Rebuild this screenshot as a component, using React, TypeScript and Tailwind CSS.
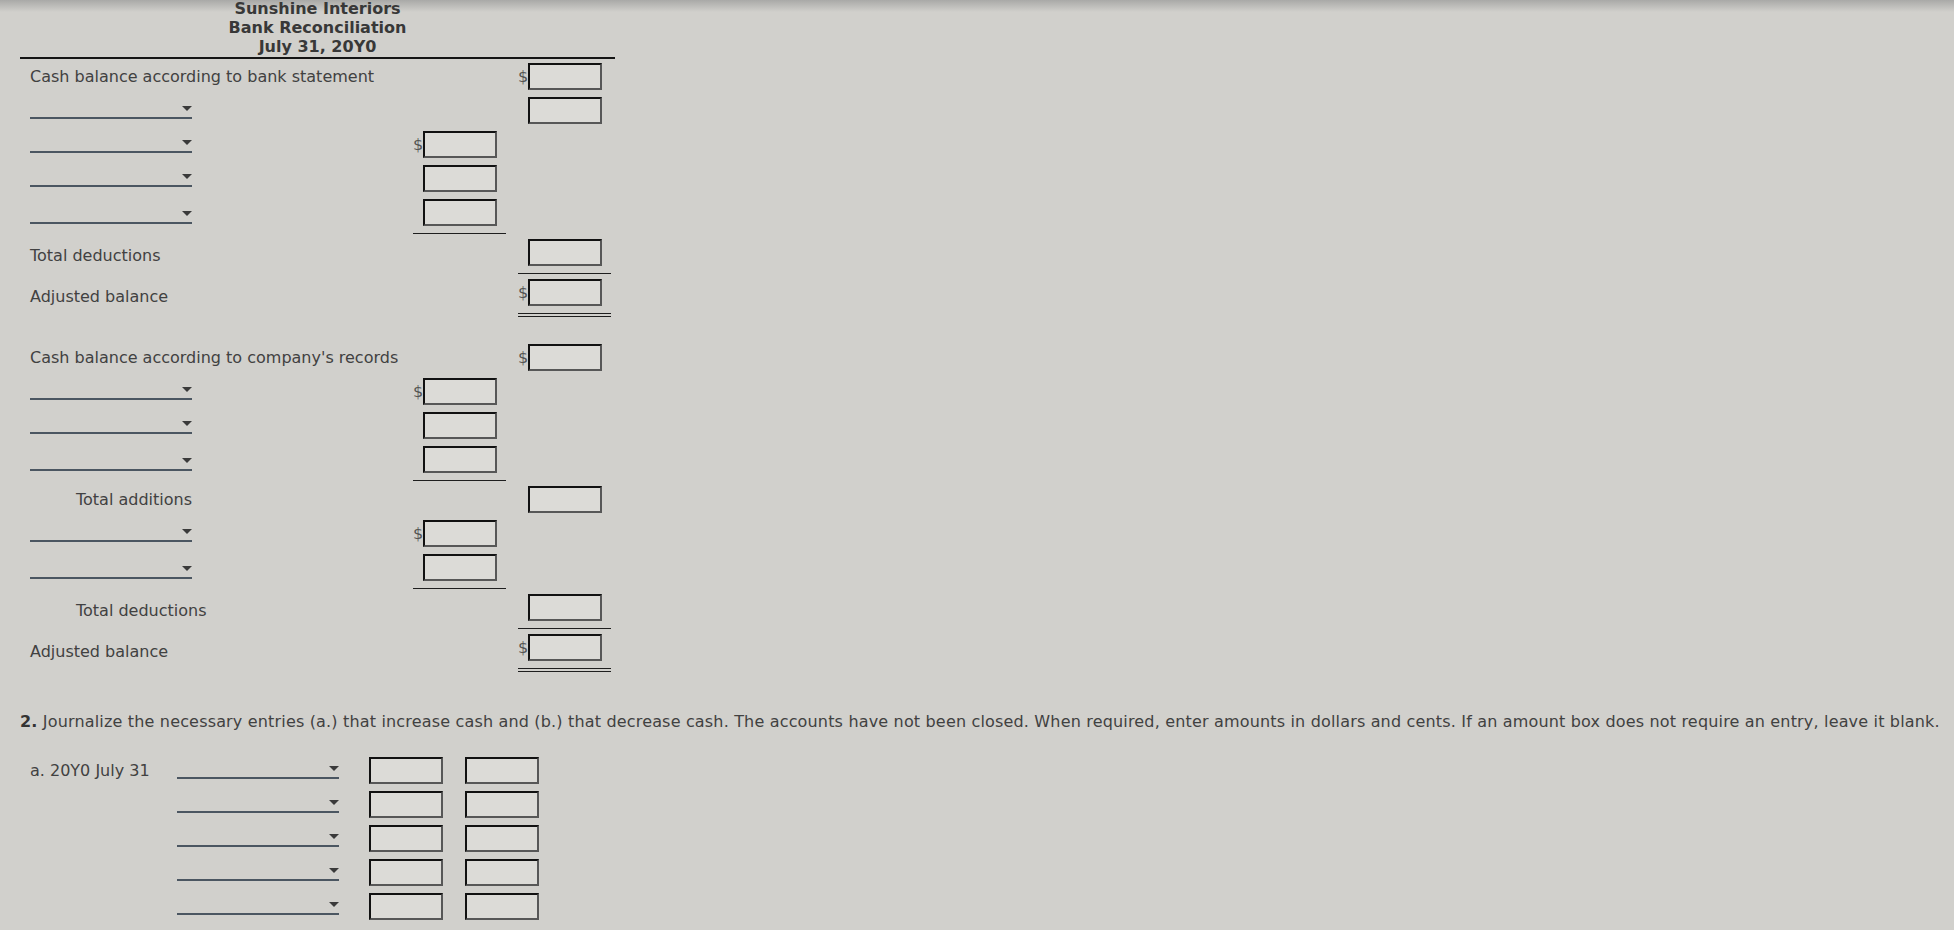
import React from "react";

type Line = "none" | "single" | "double";

interface Amount {
  dollar?: boolean;
  line?: Line;
}

interface ReconRow {
  label?: string;
  indent?: boolean;
  select?: boolean;
  left?: Amount;
  right?: Amount;
}

const BANK_ROWS: ReconRow[] = [
  { label: "Cash balance according to bank statement", right: { dollar: true } },
  { select: true, right: {} },
  { select: true, left: { dollar: true } },
  { select: true, left: {} },
  { select: true, left: { line: "single" } },
  { label: "Total deductions", right: { line: "single" } },
  { label: "Adjusted balance", right: { dollar: true, line: "double" } },
];

const COMPANY_ROWS: ReconRow[] = [
  { label: "Cash balance according to company's records", right: { dollar: true } },
  { select: true, left: { dollar: true } },
  { select: true, left: {} },
  { select: true, left: { line: "single" } },
  { label: "Total additions", indent: true, right: {} },
  { select: true, left: { dollar: true } },
  { select: true, left: { line: "single" } },
  { label: "Total deductions", indent: true, right: { line: "single" } },
  { label: "Adjusted balance", right: { dollar: true, line: "double" } },
];

const ROW_HEIGHT: Record<Line, string> = {
  none: "h-[34px]",
  single: "h-[40px]",
  double: "h-[41px]",
};

function rowLine(row: ReconRow): Line {
  const lines = [row.left?.line, row.right?.line];
  if (lines.includes("double")) return "double";
  if (lines.includes("single")) return "single";
  return "none";
}

function AmountBox() {
  return (
    <input
      type="text"
      className="h-[27px] w-[74px] border-2 border-t-[#111] border-l-[#111] border-r-[#575757] border-b-[#575757] bg-[#dcdbd7] outline-none"
    />
  );
}

function Dropdown() {
  return (
    <div className="flex h-4 w-[162px] items-start justify-end border-b-2 border-[#4b5661]">
      <div className="mt-[3px] h-0 w-0 border-x-[5px] border-t-[5px] border-x-transparent border-t-[#3a3a3a]" />
    </div>
  );
}

function AmountCell({ amount }: { amount?: Amount }) {
  return (
    <div className="flex w-[93px] flex-col pt-[3px]">
      {amount && (
        <>
          <div className="flex items-center">
            <span className="w-[10px] text-[16px] leading-none text-[#555]">
              {amount.dollar ? "$" : ""}
            </span>
            <AmountBox />
          </div>
          {amount.line && amount.line !== "none" && (
            <div className="mt-[7px] h-px w-full bg-[#1e1e1e]" />
          )}
          {amount.line === "double" && <div className="mt-[2px] h-px w-full bg-[#1e1e1e]" />}
        </>
      )}
    </div>
  );
}

function Row({ row }: { row: ReconRow }) {
  return (
    <div className={`flex ${ROW_HEIGHT[rowLine(row)]}`}>
      <div className={`flex w-[393px] items-center ${row.indent ? "pl-[56px]" : "pl-[10px]"}`}>
        {row.select ? <Dropdown /> : <span>{row.label}</span>}
      </div>
      <AmountCell amount={row.left} />
      <div className="w-[12px]" />
      <AmountCell amount={row.right} />
    </div>
  );
}

export default function App() {
  return (
    <div
      className="relative min-h-screen overflow-hidden bg-[#d1d0cc] text-[16px] text-[#414141]"
      style={{ fontFamily: '"DejaVu Sans", Verdana, sans-serif' }}
    >
      {/* header shadow from the frame above */}
      <div className="pointer-events-none absolute inset-x-0 top-0 h-[12px] bg-linear-to-b from-[#a9a9a7] to-[#d1d0cc]/0" />

      <div className="relative flex flex-col pl-[20px]">
        <div className="flex w-[595px] flex-col">
          <div className="-mt-px border-b-2 border-[#141414] pb-[1px] text-center font-bold leading-[19px] text-[#383838]">
            <div>Sunshine Interiors</div>
            <div>Bank Reconciliation</div>
            <div>July 31, 20Y0</div>
          </div>

          <div className="flex flex-col pt-px">
            {BANK_ROWS.map((row, i) => (
              <Row key={`b${i}`} row={row} />
            ))}
            <div className="h-[24px]" />
            {COMPANY_ROWS.map((row, i) => (
              <Row key={`c${i}`} row={row} />
            ))}
          </div>
        </div>

        <p className="mt-[38px] whitespace-nowrap leading-[24px] tracking-[0.17px]">
          <span className="font-bold text-[#333]">2.</span> Journalize the necessary entries (a.) that
          increase cash and (b.) that decrease cash. The accounts have not been closed. When required,
          enter amounts in dollars and cents. If an amount box does not require an entry, leave it blank.
        </p>

        <div className="mt-[20px] flex flex-col">
          {[0, 1, 2, 3, 4].map((i) => (
            <div key={i} className="flex h-[34px]">
              <div className="flex w-[157px] items-center pl-[10px]">
                {i === 0 ? "a. 20Y0 July 31" : ""}
              </div>
              <div className="flex items-center">
                <Dropdown />
              </div>
              <div className="ml-[30px] pt-[3px]">
                <AmountBox />
              </div>
              <div className="ml-[22px] pt-[3px]">
                <AmountBox />
              </div>
            </div>
          ))}
        </div>
      </div>
    </div>
  );
}
